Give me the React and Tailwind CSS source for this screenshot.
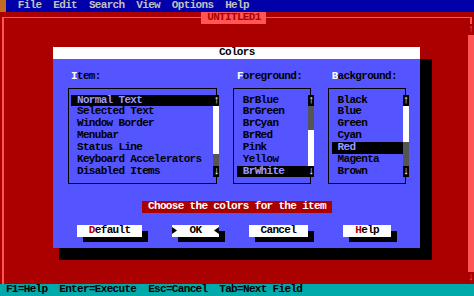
// text-mode screen: 80 cols x 25 rows, each cell 5.925 x 11.84
function Frame({ place }) {
  return (
    <div className={`${place} flex flex-col`}>
      <div className="flex-1 mx-[2.46px] my-[5.42px] border border-black" />
    </div>
  );
}

function Scroll({ place, track }) {
  return (
    <div className={`${place} flex flex-col`}>
      <div className="h-[11.84px] bg-black text-white text-center">↑</div>
      {track.map((t, i) => (
        <div key={i} className={t === "g" ? "h-[11.84px] bg-[#555555]" : "h-[11.84px] bg-white"} />
      ))}
      <div className="h-[11.84px] bg-black text-white text-center">↓</div>
    </div>
  );
}

function Arrow({ left }) {
  return (
    <span className="inline-flex w-[5.925px] h-[11.84px] items-center justify-center align-top">
      <svg width="5" height="7" viewBox="0 0 5 7">
        <path d={left ? "M5 0 L0 3.5 L5 7 Z" : "M0 0 L5 3.5 L0 7 Z"} fill="black" />
      </svg>
    </span>
  );
}

function Button({ place, shadowRight, shadowBottom, children }) {
  return (
    <>
      <div className={`${place} row-start-20 row-end-21 bg-white text-black`}>{children}</div>
      <div className={`${shadowRight} row-start-20 row-end-21 flex flex-col justify-end`}>
        <div className="h-[5.92px] bg-black" />
      </div>
      <div className={`${shadowBottom} row-start-21 row-end-22`}>
        <div className="h-[5.92px] bg-black" />
      </div>
    </>
  );
}

export default function App() {
  return (
    <div className="w-[474px] h-[296px] overflow-hidden bg-[#aa0000] grid grid-cols-[repeat(80,5.925px)] grid-rows-[repeat(25,11.84px)] font-['Liberation_Mono',monospace] font-bold text-[11px] leading-[11.84px] tracking-[-0.675px] whitespace-pre text-black">
      {/* menu bar */}
      <div className="col-start-1 col-end-81 row-start-1 row-end-2 flex bg-[#0000aa] text-[#c0c0c0]">
        <div className="w-[5.925px] bg-[#c46a24]" />
        <span>{"  File  Edit  Search  View  Options  Help"}</span>
      </div>

      {/* editor window */}
      <div className="col-start-1 col-end-81 row-start-2 row-end-25 flex flex-col">
        <div className="flex-1 mt-[5.42px] ml-[2px] mr-[2px] border-t border-l-2 border-r-2 border-[#ff5555]" />
      </div>
      <div className="col-start-35 col-end-46 row-start-2 row-end-3 bg-[#ff5555] text-[#aa0000]">{" UNTITLED1 "}</div>
      <div className="col-start-80 col-end-81 row-start-3 row-end-25 flex flex-col bg-[#aa0000] text-[#ff5555]">
        <div className="h-[11.84px] text-center">↑</div>
        <div className="flex-1 bg-[#ff5555]" />
        <div className="h-[11.84px] text-center">↓</div>
      </div>

      {/* dialog shadow */}
      <div className="col-start-72 col-end-74 row-start-6 row-end-23 bg-black" />
      <div className="col-start-11 col-end-74 row-start-22 row-end-23 bg-black" />

      {/* dialog */}
      <div className="col-start-10 col-end-72 row-start-5 row-end-22 bg-[#5555ff]" />
      <div className="col-start-10 col-end-72 row-start-5 row-end-6 bg-white text-center">Colors</div>

      <div className="col-start-13 col-end-18 row-start-7 row-end-8">
        <span className="text-white">I</span>tem:
      </div>
      <div className="col-start-41 col-end-52 row-start-7 row-end-8">
        <span className="text-white">F</span>oreground:
      </div>
      <div className="col-start-57 col-end-68 row-start-7 row-end-8">
        <span className="text-white">B</span>ackground:
      </div>

      {/* item list */}
      <Frame place="col-start-12 col-end-38 row-start-8 row-end-17" />
      <div className="col-start-13 col-end-37 row-start-9 row-end-10 bg-black text-[#9a9aff]">{" Normal Text"}</div>
      <div className="col-start-14 col-end-36 row-start-10 row-end-11">Selected Text</div>
      <div className="col-start-14 col-end-36 row-start-11 row-end-12">Window Border</div>
      <div className="col-start-14 col-end-36 row-start-12 row-end-13">Menubar</div>
      <div className="col-start-14 col-end-36 row-start-13 row-end-14">Status Line</div>
      <div className="col-start-14 col-end-36 row-start-14 row-end-15">Keyboard Accelerators</div>
      <div className="col-start-14 col-end-36 row-start-15 row-end-16">Disabled Items</div>
      <Scroll place="col-start-37 col-end-38 row-start-9 row-end-16" track={["w", "w", "w", "w", "g"]} />

      {/* foreground list */}
      <Frame place="col-start-40 col-end-54 row-start-8 row-end-17" />
      <div className="col-start-42 col-end-52 row-start-9 row-end-10">BrBlue</div>
      <div className="col-start-42 col-end-52 row-start-10 row-end-11">BrGreen</div>
      <div className="col-start-42 col-end-52 row-start-11 row-end-12">BrCyan</div>
      <div className="col-start-42 col-end-52 row-start-12 row-end-13">BrRed</div>
      <div className="col-start-42 col-end-52 row-start-13 row-end-14">Pink</div>
      <div className="col-start-42 col-end-52 row-start-14 row-end-15">Yellow</div>
      <div className="col-start-41 col-end-53 row-start-15 row-end-16 bg-black text-[#9a9aff]">{" BrWhite"}</div>
      <Scroll place="col-start-53 col-end-54 row-start-9 row-end-16" track={["g", "g", "w", "w", "w"]} />

      {/* background list */}
      <Frame place="col-start-56 col-end-70 row-start-8 row-end-17" />
      <div className="col-start-58 col-end-68 row-start-9 row-end-10">Black</div>
      <div className="col-start-58 col-end-68 row-start-10 row-end-11">Blue</div>
      <div className="col-start-58 col-end-68 row-start-11 row-end-12">Green</div>
      <div className="col-start-58 col-end-68 row-start-12 row-end-13">Cyan</div>
      <div className="col-start-57 col-end-69 row-start-13 row-end-14 bg-black text-[#9a9aff]">{" Red"}</div>
      <div className="col-start-58 col-end-68 row-start-14 row-end-15">Magenta</div>
      <div className="col-start-58 col-end-68 row-start-15 row-end-16">Brown</div>
      <Scroll place="col-start-69 col-end-70 row-start-9 row-end-16" track={["w", "w", "w", "g", "g"]} />

      <div className="col-start-25 col-end-57 row-start-18 row-end-19 bg-[#aa0000] text-white">{" Choose the colors for the item "}</div>

      {/* buttons */}
      <Button place="col-start-14 col-end-25" shadowRight="col-start-25 col-end-26" shadowBottom="col-start-15 col-end-26">
        {"  "}<span className="text-[#aa0000]">D</span>{"efault  "}
      </Button>
      <Button place="col-start-30 col-end-38 flex" shadowRight="col-start-38 col-end-39" shadowBottom="col-start-31 col-end-39">
        <Arrow />
        <span>{"  OK  "}</span>
        <Arrow left />
      </Button>
      <Button place="col-start-43 col-end-53" shadowRight="col-start-53 col-end-54" shadowBottom="col-start-44 col-end-54">
        {"  Cancel  "}
      </Button>
      <Button place="col-start-59 col-end-67" shadowRight="col-start-67 col-end-68" shadowBottom="col-start-60 col-end-68">
        {"  "}<span className="text-[#aa0000]">H</span>{"elp  "}
      </Button>

      {/* status bar */}
      <div className="col-start-1 col-end-81 row-start-25 row-end-26 bg-[#00aaaa]">
        {" F1=Help  Enter=Execute  Esc=Cancel  Tab=Next Field"}
      </div>
    </div>
  );
}
